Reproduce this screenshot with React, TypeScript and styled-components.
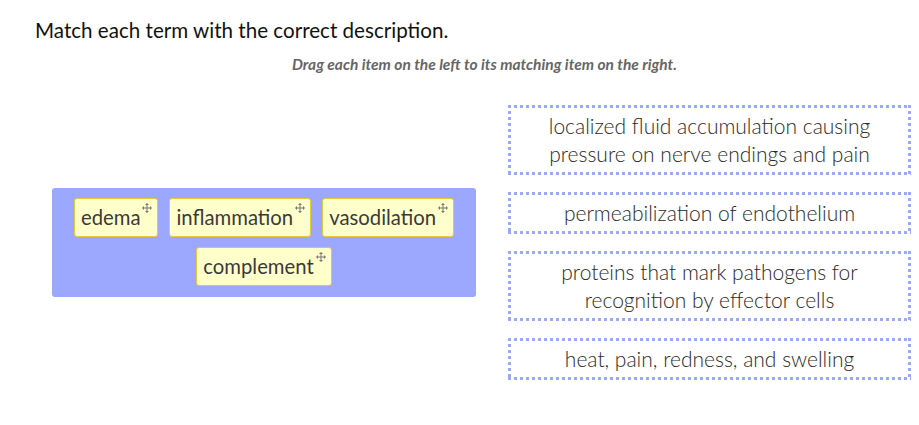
import React from "react";
import styled, { createGlobalStyle } from "styled-components";

const Global = createGlobalStyle`
  html, body { margin: 0; padding: 0; background: #fff; }
  body { font-family: Lato, "Noto Sans", "Liberation Sans", sans-serif; }
`;

const Page = styled.div`
  width: 919px;
  height: 425px;
  box-sizing: border-box;
  padding: 16px 8px 0 35px;
`;

const Title = styled.h1`
  margin: 0;
  font-size: 20.6px;
  line-height: 28px;
  font-weight: 400;
  color: #111;
`;

const Instruction = styled.p`
  margin: 10px 0 0 0;
  padding-left: 23px;
  text-align: center;
  font-size: 15.5px;
  line-height: 20px;
  font-weight: 700;
  font-style: italic;
  color: #666;
`;

const Board = styled.div`
  display: flex;
  align-items: center;
  gap: 32px;
  margin-top: 31px;
  padding-left: 17px;
`;

const Pool = styled.div`
  width: 424px;
  box-sizing: border-box;
  background: #9ba8fd;
  border-radius: 3px;
  padding: 5px 10px 6px;
  display: flex;
  flex-wrap: wrap;
  justify-content: center;
`;

const Tile = styled.div`
  display: flex;
  align-items: flex-start;
  margin: 5px 5.5px;
  height: 39px;
  box-sizing: border-box;
  padding: 0 5px 0 6px;
  background: #ffffcc;
  border: 1px solid #eac63a;
  border-radius: 3px;
  font-size: 20.3px;
  line-height: 37px;
  color: #3a3a3a;
`;

const Grip = styled.svg`
  width: 10px;
  height: 10px;
  margin: 4px 0 0 2px;
  flex: none;
`;

const Targets = styled.div`
  width: 403px;
  display: flex;
  flex-direction: column;
  gap: 17px;
`;

const dot = "#9ba8fd";

const Target = styled.div`
  padding: 7px 8px;
  text-align: center;
  font-size: 21px;
  line-height: 28px;
  font-weight: 300;
  color: #2a2a2a;
  background-image:
    repeating-linear-gradient(to right, ${dot} 0 3px, transparent 3px 6px),
    repeating-linear-gradient(to right, ${dot} 0 3px, transparent 3px 6px),
    repeating-linear-gradient(to bottom, ${dot} 0 3px, transparent 3px 6px),
    repeating-linear-gradient(to bottom, ${dot} 0 3px, transparent 3px 6px);
  background-size: 100% 3px, 100% 3px, 3px 100%, 3px 100%;
  background-position: 0 0, 0 100%, 0 0, 100% 0;
  background-repeat: no-repeat;
`;

const MoveIcon = () => (
  <Grip viewBox="0 0 10 10" aria-hidden="true">
    <g fill="#777">
      <rect x="4.5" y="1.5" width="1" height="7" />
      <rect x="1.5" y="4.5" width="7" height="1" />
      <polygon points="5,0 3,2 7,2" />
      <polygon points="5,10 3,8 7,8" />
      <polygon points="0,5 2,3 2,7" />
      <polygon points="10,5 8,3 8,7" />
    </g>
  </Grip>
);

const terms = ["edema", "inflammation", "vasodilation", "complement"];
const descriptions = [
  ["localized fluid accumulation causing", "pressure on nerve endings and pain"],
  ["permeabilization of endothelium"],
  ["proteins that mark pathogens for", "recognition by effector cells"],
  ["heat, pain, redness, and swelling"],
];

export default function App() {
  return (
    <Page>
      <Global />
      <Title>Match each term with the correct description.</Title>
      <Instruction>Drag each item on the left to its matching item on the right.</Instruction>
      <Board>
        <Pool>
          {terms.map((t) => (
            <Tile key={t}>
              {t}
              <MoveIcon />
            </Tile>
          ))}
        </Pool>
        <Targets>
          {descriptions.map((lines) => (
            <Target key={lines[0]}>
              {lines.map((l, i) => (
                <React.Fragment key={l}>
                  {i > 0 && <br />}
                  {l}
                </React.Fragment>
              ))}
            </Target>
          ))}
        </Targets>
      </Board>
    </Page>
  );
}
